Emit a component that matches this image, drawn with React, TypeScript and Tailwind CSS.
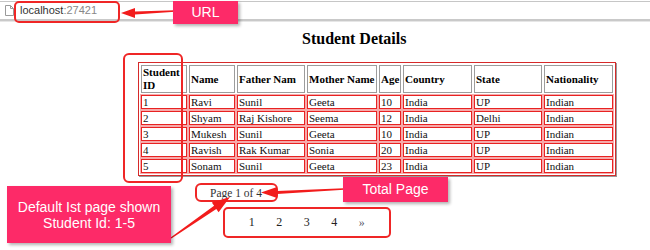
const serif = "font-['Liberation_Serif',serif]";
const sans = "font-['Liberation_Sans',Arial,sans-serif]";

const headers: { label: string; w: string }[] = [
  { label: 'Student ID', w: 'w-[46px]' },
  { label: 'Name', w: 'w-[46px]' },
  { label: 'Father Nam', w: 'w-[68px]' },
  { label: 'Mother Name', w: 'w-[70px]' },
  { label: 'Age', w: 'w-[22px]' },
  { label: 'Country', w: 'w-[69px]' },
  { label: 'State', w: 'w-[68px]' },
  { label: 'Nationality', w: 'w-[69px]' },
];

const students = [
  ['1', 'Ravi', 'Sunil', 'Geeta', '10', 'India', 'UP', 'Indian'],
  ['2', 'Shyam', 'Raj Kishore', 'Seema', '12', 'India', 'Delhi', 'Indian'],
  ['3', 'Mukesh', 'Sunil', 'Geeta', '10', 'India', 'UP', 'Indian'],
  ['4', 'Ravish', 'Rak Kumar', 'Sonia', '20', 'India', 'UP', 'Indian'],
  ['5', 'Sonam', 'Sunil', 'Geeta', '23', 'India', 'UP', 'Indian'],
];

function Arrows() {
  return (
    <svg className="absolute left-0 top-0 pointer-events-none" width="650" height="250" viewBox="0 0 650 250">
      <polygon fill="#f21c1c" points="121,13 135,8 135,11.5 175,10.3 175,11.7 135,14.5 135,18" />
      <polygon fill="#f21c1c" points="261,192.5 277,187 277,191 344,188.3 344,189.8 277,194 277,198" />
      <polygon
        fill="#f21c1c"
        points="170.6,237.4 214.1,205.7 211.8,202.4 230,197 218.6,212.2 216.3,208.9 171.4,238.6"
      />
    </svg>
  );
}

export default function App() {
  return (
    <div className={`relative w-[650px] h-[250px] overflow-hidden bg-white ${serif}`}>
      {/* browser address bar */}
      <div className="h-[24px] pt-[1px]">
        <div className="h-[20px] border-t border-[#c6c6c6] border-b-2 border-b-[#c9c9c9] flex items-center pl-[5px] gap-[6px]">
          <svg width="9" height="11" viewBox="0 0 9 11" className="shrink-0">
            <path d="M0.5 0.5h5l3 3v7h-8z M5.5 0.5v3h3" fill="#fff" stroke="#9a9a9a" strokeWidth="1" />
          </svg>
          <span className={`${sans} text-[11px] leading-none text-[#333]`}>
            localhost<span className="text-[#888]">:27421</span>
          </span>
        </div>
        <div className="h-[1px] bg-[#e6e6e6]" />
      </div>

      <h1 className="mt-[6px] pl-[302px] text-[16px] leading-[18px] font-bold text-black">Student Details</h1>

      <table className="mt-[14px] ml-[138px] table-fixed border-separate border-spacing-[2px] border border-[#d62a2a] shadow-[1px_1px_0_#9a9a9a] text-black">
        <thead>
          <tr>
            {headers.map((h) => (
              <th
                key={h.label}
                className={`${h.w} h-[28px] p-0 pl-[1px] border border-[#9c9c9c] text-left align-middle font-bold text-[11px] leading-[13px] overflow-hidden`}
              >
                {h.label}
              </th>
            ))}
          </tr>
        </thead>
        <tbody>
          {students.map((row) => (
            <tr key={row[0]}>
              {row.map((cell, i) => (
                <td
                  key={i}
                  className="h-[14px] p-0 pl-[1px] border border-[#e82222] shadow-[0_0_0_1px_#f6aaaa] text-[11px] leading-[12px] whitespace-nowrap overflow-hidden text-[#111]"
                >
                  {cell}
                </td>
              ))}
            </tr>
          ))}
        </tbody>
      </table>

      <div className="mt-[10px] ml-[210px] text-[11.5px] leading-[14px] text-[#333]">Page 1 of 4</div>

      <div className="mt-[14px] ml-[238px] flex text-[12px] leading-[16px] text-[#222]">
        {['1', '2', '3', '4'].map((n) => (
          <span key={n} className="w-[27.5px] text-center">
            {n}
          </span>
        ))}
        <span className="w-[27.5px] text-center text-[#556]">»</span>
      </div>

      {/* annotation frames */}
      <div className="absolute left-[14px] top-[1px] w-[106px] h-[22px] rounded-[5px] border-2 border-[#ef2626]" />
      <div className="absolute left-[123px] top-[53px] w-[60px] h-[130px] rounded-[6px] border-2 border-[#ef2626]" />
      <div className="absolute left-[195px] top-[183px] w-[83px] h-[19px] rounded-[6px] border-2 border-[#ef2626]" />
      <div className="absolute left-[223px] top-[207px] w-[168px] h-[31px] rounded-[5px] border-2 border-[#ef2626]" />

      <Arrows />

      {/* labels */}
      <div
        className={`absolute left-[173px] top-[1px] w-[65px] h-[23px] bg-[#fd2a68] shadow-[2px_2px_3px_rgba(0,0,0,0.3)] flex items-center justify-center ${sans} text-[14px] text-white`}
      >
        URL
      </div>
      <div
        className={`absolute left-[343px] top-[177px] w-[105px] h-[25px] bg-[#fd2a68] shadow-[2px_2px_3px_rgba(0,0,0,0.3)] flex items-center justify-center ${sans} text-[14px] text-white`}
      >
        Total Page
      </div>
      <div
        className={`absolute left-[7px] top-[186px] w-[164px] h-[57px] bg-[#fd2a68] shadow-[2px_2px_3px_rgba(0,0,0,0.3)] flex flex-col items-center justify-center ${sans} text-[14px] leading-[16px] text-white`}
      >
        <span>Default Ist page shown</span>
        <span>Student Id: 1-5</span>
      </div>
    </div>
  );
}
